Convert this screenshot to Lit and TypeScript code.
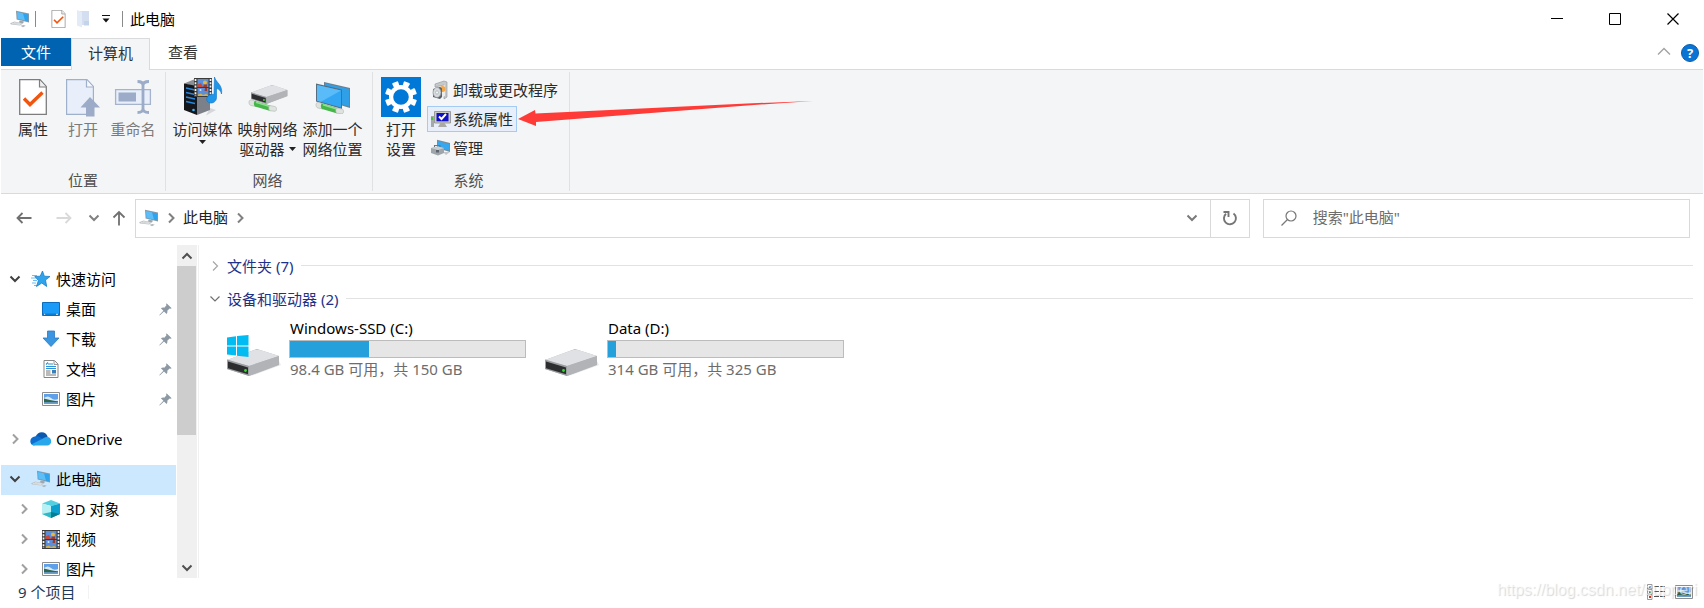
import { LitElement, html, svg, css, nothing, TemplateResult } from "lit";
import { customElement, property } from "lit/decorators.js";

const pcIcon = html`<svg width="20" height="18" viewBox="0 0 20 18" aria-hidden="true">
  <path d="M6 .8 19 3.6V12.4L6.6 9.6z" fill="#8b98a3" />
  <path d="M7 2 18.2 4.4V11.3L7.4 8.8z" fill="#2ea3ee" />
  <path d="M7 2 13 3.3 15 10.5 7.4 8.8z" fill="#5dbdf6" />
  <path d="M10 10.4 14 11.4 13 13.5 8.5 12.5z" fill="#9da7ae" />
  <path d="M0 13.2 4.5 11.6 13 13.6 10 15.6 1 14.4z" fill="#bfc5c9" />
  <path d="M2 13.4 10 14.6M4 12.6 11 13.9" stroke="#eceeef" stroke-width=".6" />
  <path d="M10.500 15.800 13.500 14.900 15.800 15.800 13 17.200z" fill="#b0b7bc" />
</svg>`;

const checkPage = (w: number, h: number) => html`<svg width=${w} height=${h} viewBox="0 0 28 36" aria-hidden="true">
  <path d="M.7.7H21L27.3 7.5V35.3H.7z" fill="#fff" stroke="#7d7d7d" stroke-width="1.3" />
  <path d="M20.5 1V8H27" fill="#f0f0f0" stroke="#7d7d7d" stroke-width="1.2" />
  <path d="M5 19.5 11 25.5 23.5 13.5" fill="none" stroke="#f0560f" stroke-width="3.4" />
</svg>`;

const folderIcon = html`<svg width="14" height="18" viewBox="0 0 14 18" aria-hidden="true">
  <path d="M3 1H12V15H3z" fill="#d3dff0" />
  <path d="M0 0 5 2V17.5L0 15.5z" fill="#e3ebf7" />
  <path d="M7 11H12V15.5H7z" fill="#c3d3ea" />
</svg>`;

const openIcon = html`<svg width="36" height="40" viewBox="0 0 36 40" aria-hidden="true">
  <path d="M1.6 2.6H22L28.4 9.5V37.4H1.6z" fill="#e8effa" stroke="#9fb0cb" stroke-width="1.2" />
  <path d="M21.5 3V10H28" fill="#f5f8fc" stroke="#9fb0cb" stroke-width="1.2" />
  <path d="M25 20 35 30.5H29.5V39.5H21V30.5H15.5z" fill="#9babc8" />
</svg>`;

const renameIcon = html`<svg width="38" height="36" viewBox="0 0 38 36" aria-hidden="true">
  <path d="M1.6 10.6H36.4V25.4H1.6z" fill="#e8effa" stroke="#a5b3cc" stroke-width="1.3" />
  <path d="M4.5 13.5H22V22.500H4.5z" fill="#9babc8" />
  <path d="M23.500 2.500C27 2.500 29 3.500 29 6.500V29.500C29 32.500 27 33.500 23.500 33.500M35 2.500C31.500 2.500 29 3.500 29 6.500M35 33.500C31.500 33.500 29 32.500 29 29.500" fill="none" stroke="#9babc8" stroke-width="2.8" />
</svg>`;

const filmFrame = svg`<path d="M0 0H18V19H0z" fill="#3b3b3b" />
  <path d="M1.500 1V18M16.500 1V18" stroke="#f2f2f2" stroke-width="1.700" stroke-dasharray="2 1.300" />
  <path d="M3.500 1H14.500V9H3.500zM3.500 10H14.500V18H3.500z" fill="#5b8fdc" />
  <path d="M3.500 6.500 7 5 9 9H3.500z" fill="#c9483c" />
  <circle cx="11" cy="4.500" r="2" fill="#e6b93a" />
  <path d="M10 6.500H13V9H9zM11 10H13V13H10.500z" fill="#9c3a2c" />
  <path d="M4 16.500 7 15.500 9 17 12 16 14 17V18H4z" fill="#dcae3c" />
  <circle cx="6.500" cy="12" r="1" fill="#d8e8ff" />`;

const mediaIcon = html`<svg width="40" height="40" viewBox="0 0 40 40" aria-hidden="true">
  <path d="M23 38.500 33 33 27 31z" fill="#d5d7da" />
  <path d="M1 6.500 12 2 27 6 14 10z" fill="#8b8f96" />
  <path d="M1 6.500 14 9V38L1 33z" fill="#14161a" />
  <path d="M14 9 27 6V33L14 38z" fill="#7c8189" />
  <path d="M3 11 12 13M3 15.500 12 17.500M3 20 12 22M3 24.500 12 26.500" stroke="#2788e0" stroke-width="1.500" />
  <circle cx="10.500" cy="33" r="1.300" fill="#39b7ff" />
  <g transform="translate(11 1)">${filmFrame}</g>
  <path d="M31.500 0C33 6 40 7.500 38.500 17C37.800 13.500 36 12 33.500 11.500V20.500C33.500 25 29 27 25.800 25.600C22.500 24 23 19.500 27 17.800C28.800 17 30 17.200 31 17.500z" fill="#1e96ea" stroke="#1274c4" stroke-width=".6" />
</svg>`;

const cable = svg`<path d="M1 5C1 3 3 2.600 4.500 3.200L8 4.500V9.500L3 8.500C1.500 8 1 7 1 5z" fill="#dfe3e0" stroke="#adb4af" stroke-width=".6" />
  <path d="M7 4 22 8.500C24 9.500 23.500 14 21.500 13.700L7 9.500C5.500 8.500 5.500 4.500 7 4z" fill="#45b649" />
  <path d="M8 5.200 21 9.200" stroke="#8fe08f" stroke-width="1.500" />
  <path d="M21.500 8.500 27 9.500C29 10 29 14 27 14.300L21.500 13.700C20.500 12 20.500 10 21.500 8.500z" fill="#dfe3e0" stroke="#adb4af" stroke-width=".6" />`;

const driveBody = svg`<path d="M0 11 30 0 52 7V16L22 27 0 20z" fill="#b4b6b9" />
  <path d="M0 11 26 1.500Q30 0 34 1.200L52 7 22 17z" fill="#dfe1e4" />
  <path d="M22 17 52 7V15.500L22 27z" fill="#b1b3b6" />
  <path d="M0 10.500 22 17V27L0 20z" fill="#9c9ea1" />
  <path d="M1 12.500 21 18.400V25.300L1 19.200z" fill="#2b2d2e" />
  <circle cx="18.500" cy="21.500" r="1.400" fill="#3ed43e" />`;

const netDriveIcon = html`<svg width="40" height="32" viewBox="0 0 40 32" aria-hidden="true">
  <g transform="translate(0 16)">${cable}</g>
  <g transform="translate(3 4) scale(.7)">${driveBody}</g>
</svg>`;

const netPlaceIcon = html`<svg width="36" height="34" viewBox="0 0 36 34" aria-hidden="true">
  <path d="M9 2 35 8V28L9 20z" fill="#6d7f8d" />
  <path d="M10 3.300 34 9V26.600L10 19.500z" fill="#2f9fe8" />
  <path d="M1 3.500 27 9.500V29L1 21.500z" fill="#566d80" />
  <path d="M2 5 26 10.500V27.600L2 20.700z" fill="#33a6f3" />
  <path d="M2 5 26 10.500 6 21.800 2 20.700z" fill="#59bbf8" />
  <g transform="translate(0 19.500)">${cable}</g>
</svg>`;

const gearTeeth = [0, 45, 90, 135, 180, 225, 270, 315];
const gearIcon = html`<svg width="40" height="40" viewBox="0 0 40 40" aria-hidden="true">
  <path d="M0 0H40V40H0z" fill="#0078d7" />
  <circle cx="20" cy="20" r="9.900" fill="none" stroke="#fff" stroke-width="4.200" />
  ${gearTeeth.map((a) => svg`<path d="M17.200 9.500 16.800 5Q16.800 4 17.800 4H22.200Q23.200 4 23.200 5L22.800 9.500z" fill="#fff" transform="rotate(${a + 22.5} 20 20)" />`)}
</svg>`;

const uninstallIcon = html`<svg width="20" height="20" viewBox="0 0 20 20" aria-hidden="true">
  <path d="M4 4 13 1 16 2V17L13 19V5L4 7z" fill="#c6c9cb" stroke="#8d9295" stroke-width=".6" />
  <path d="M9 7 14 5V16L9 18z" fill="#e9ebec" />
  <circle cx="11.500" cy="9" r="3" fill="#f2a64a" />
  <path d="M2 9 9 7 11 8.500V17L9 19 2 17z" fill="#596066" />
  <ellipse cx="6" cy="12.500" rx="4" ry="5" fill="#d5dadd" stroke="#8e979c" stroke-width=".7" />
  <ellipse cx="6" cy="12.500" rx="1.300" ry="1.700" fill="#fff" stroke="#848d92" stroke-width=".5" />
</svg>`;

const sysPropIcon = html`<svg width="20" height="20" viewBox="0 0 20 20" aria-hidden="true">
  <path d="M0 7H3V18H0z" fill="#a5aaa8" /><path d="M0 8H2V11H0z" fill="#46c436" />
  <path d="M3.500 2.500H19.500V14H3.500z" fill="#c9c9c4" stroke="#8b8b88" stroke-width=".8" />
  <path d="M5.500 4H17.500V12.300H5.500z" fill="#1010c8" />
  <path d="M8 7.500 10.500 10 15 5" fill="none" stroke="#fff" stroke-width="1.900" />
  <path d="M9.500 14H13.500L16 18H7z" fill="#a9a9a6" />
</svg>`;

const manageIcon = html`<svg width="20" height="18" viewBox="0 0 20 18" aria-hidden="true">
  <path d="M6 .8 19 4V13L6 9z" fill="#7a8a97" /><path d="M7 2.200 18.200 5V11.600L7 8.300z" fill="#35a8f0" />
  <path d="M12 13 19 13 15 16z" fill="#c2c7cb" />
  <path d="M0 9 7 7.500 13 9V14L7 16.500 0 14z" fill="#9ea6ac" /><path d="M0 9 7 7.500 13 9 7 11z" fill="#c9ced2" />
  <path d="M3.500 8V6.500H9V8" fill="none" stroke="#6e767c" stroke-width="1.100" /><path d="M5 11H8V13.500H5z" fill="#5d666d" />
</svg>`;

const starIcon = html`<svg width="20" height="18" viewBox="0 0 20 18" aria-hidden="true">
  <path d="M1 5.500H6M0 8H5M2 10.500H6M1 13H5M3 15.500H6" stroke="#6cbdf0" stroke-width="1" />
  <path d="M11.500 1 13.300 6.200 19 6.500 14.500 10 15.700 16.500 10.800 13 5.500 16.500 7.400 10.400 3.800 6.500 9.200 6.200z" fill="#2fa4ec" stroke="#1a7fc9" stroke-width=".8" />
</svg>`;

const desktopIcon = html`<svg width="18" height="14" viewBox="0 0 18 14" aria-hidden="true">
  <path d="M.5.5H17.500V13.500H.5z" fill="#1a9bf8" stroke="#0b6dbb" /><path d="M1 11.500H17V13H1z" fill="#0c7bd0" />
  <path d="M2 12.300H3.200M14 12.300H16" stroke="#fff" stroke-width=".9" />
</svg>`;

const downloadIcon = html`<svg width="18" height="18" viewBox="0 0 18 18" aria-hidden="true">
  <path d="M5.500 1H12.500V8H17L9 16.500 1 8H5.500z" fill="#3b96e2" stroke="#2a78c2" stroke-width=".8" />
</svg>`;

const docIcon = html`<svg width="16" height="18" viewBox="0 0 16 18" aria-hidden="true">
  <path d="M1 .5H11.500L15 4V17.500H1z" fill="#fff" stroke="#858585" /><path d="M11 1V4.500H15" fill="#eee" stroke="#858585" stroke-width=".8" />
  <path d="M3 4.500 5 2.500M5 4H10M3 6.500H13M3 8.500H13" stroke="#2b91d8" stroke-width="1.100" />
  <path d="M3 11H7.500M3 13H7.500M3 15H13" stroke="#777" stroke-width="1" /><path d="M9 10H13V13.500H9z" fill="#3a7fb5" />
</svg>`;

const pictureIcon = html`<svg width="18" height="14" viewBox="0 0 18 14" aria-hidden="true">
  <path d="M.5.5H17.500V13.500H.5z" fill="#fff" stroke="#8d8d8d" />
  <path d="M2 2H16V12H2z" fill="#5fa0e8" /><path d="M2 6Q6 3 9 6T16 7V9H2z" fill="#d6e9fb" />
  <path d="M2 6.500 8 8 16 9.500V10.500H2z" fill="#2f6650" /><path d="M2 10.300H16V12H2z" fill="#6f9ec6" />
</svg>`;

const cloudIcon = html`<svg width="22" height="14" viewBox="0 0 22 14" aria-hidden="true">
  <path d="M5.500 5C6.500 2 9 .3 11.700.3C14.700.3 17 2.300 17.700 5L11 9z" fill="#0a58b0" />
  <path d="M4.800 4.500C7 4 9 4.600 10.500 5.600L14 7.700 4 13.500C1.700 13.300.3 11.400.3 9.200C.3 6.700 2.300 4.600 4.800 4.500z" fill="#0f6fd0" />
  <path d="M17 5C19.700 5 21.200 7 21.200 9.300C21.200 11.700 19.500 13.600 17 13.600H5C3.600 13.600 2.500 13 1.700 12.200L13 6.500C14.300 5.500 15.500 5 17 5z" fill="#28a8ea" />
</svg>`;

const cubeIcon = html`<svg width="18" height="18" viewBox="0 0 18 18" aria-hidden="true">
  <path d="M0 3.500 9 0 18 3.500 9 6z" fill="#53cfdf" /><path d="M0 3.500 9 6V18L0 14z" fill="#b9f0f3" />
  <path d="M18 3.500 9 6V18L18 14z" fill="#0b9fd0" /><path d="M0 14 9 12V18z" fill="#2fb8c6" /><path d="M18 14 9 12V18z" fill="#067c93" />
</svg>`;

const filmIcon = html`<svg width="18" height="19" viewBox="0 0 18 19" aria-hidden="true">${filmFrame}</svg>`;

const pinIcon = html`<svg class="pin" width="13" height="13" viewBox="0 0 13 13" aria-hidden="true">
  <path d="M7.500.3 12.700 5.200 11.300 5.800 10.600 5.500 8.300 7.800C8.600 9.200 8.300 10.300 7.600 11L5 8.400 1 12.300.2 12.600.6 11.800 4.400 7.800 1.900 5.300C2.900 4.600 4 4.400 5.300 4.700L7.500 2.300 7.100 1.500z" fill="#8c98a3" />
</svg>`;

type Dir = "up" | "down" | "right";
const turn: Record<Dir, string> = {
  down: "M1.500 3.500 6 8 10.500 3.500",
  up: "M1.500 8.500 6 4 10.500 8.500",
  right: "M4 1.500 8.500 6 4 10.500",
};
const chevron = (dir: Dir, color: string, weight = 2) => html`<svg width="12" height="12" viewBox="0 0 12 12" aria-hidden="true">
  <path d=${turn[dir]} fill="none" stroke=${color} stroke-width=${weight} />
</svg>`;

const arrow = (dir: "left" | "right" | "up", color: string) => {
  const d = {
    left: "M15.500 8H1.500M6.500 3 1.500 8 6.500 13",
    right: "M.5 8H14.500M9.500 3 14.500 8 9.500 13",
    up: "M8 15.500V2M2.500 7.500 8 2 13.500 7.500",
  }[dir];
  return html`<svg width="16" height="16" viewBox="0 0 16 16" aria-hidden="true"><path d=${d} fill="none" stroke=${color} stroke-width="1.800" /></svg>`;
};

const caret = html`<svg class="caret" width="7" height="4" viewBox="0 0 7 4" aria-hidden="true"><path d="M0 0H7L3.500 4z" fill="#222" /></svg>`;

interface Node {
  label: string;
  icon: TemplateResult;
  level: 0 | 1;
  open?: boolean;
  pinned?: boolean;
  selected?: boolean;
}

const tree: Node[][] = [
  [
    { label: "快速访问", icon: starIcon, level: 0, open: true },
    { label: "桌面", icon: desktopIcon, level: 1, pinned: true },
    { label: "下载", icon: downloadIcon, level: 1, pinned: true },
    { label: "文档", icon: docIcon, level: 1, pinned: true },
    { label: "图片", icon: pictureIcon, level: 1, pinned: true },
  ],
  [{ label: "OneDrive", icon: cloudIcon, level: 0, open: false }],
  [
    { label: "此电脑", icon: pcIcon, level: 0, open: true, selected: true },
    { label: "3D 对象", icon: cubeIcon, level: 1, open: false },
    { label: "视频", icon: filmIcon, level: 1, open: false },
    { label: "图片", icon: pictureIcon, level: 1, open: false },
  ],
];

const base = css`
  * { box-sizing: border-box; }
  svg { display: block; flex: none; }
  button, input {
    font: inherit; color: inherit; background: none; border: 0; margin: 0; padding: 0;
    text-align: left; border-radius: 0; outline: none;
  }
`;

@customElement("ribbon-bar")
class RibbonBar extends LitElement {
  static styles = [base, css`
    :host { display: flex; height: 125px; background: #f4f5f7; border: 1px solid #d9dadc; border-width: 1px 0; color: #2b2b2b; }
    .group { display: flex; flex-direction: column; justify-content: space-between; margin: 2px 0; padding: 5px 7px 1px; border-right: 1px solid #dfe1e3; }
    .network { padding-left: 4px; }
    .system { padding-left: 2px; }
    .row { display: flex; align-items: flex-start; }
    .caption { text-align: center; color: #505050; line-height: 20px; }
    .big { width: 50px; display: flex; flex-direction: column; align-items: center; gap: 2px; text-align: center; line-height: 20px; white-space: nowrap; }
    .network .big { width: 65px; }
    .system .big { width: 52px; }
    .pic { height: 40px; display: flex; align-items: center; justify-content: center; }
    .big:disabled { color: #7b7b7b; }
    .line { display: flex; align-items: center; justify-content: center; gap: 4px; }
    .under { height: 6px; }
    .list { display: flex; flex-direction: column; align-items: flex-start; gap: 3px; }
    .small { height: 26px; display: flex; align-items: center; gap: 2px; padding: 0 3px; border: 1px solid transparent; white-space: nowrap; }
    .hot { border-color: #a3cbf3; background: #e8effa; }
    .anchor { position: relative; }
    .pointer { position: absolute; left: 100%; top: -6px; pointer-events: none; }
  `];

  private big(icon: TemplateResult, label: unknown, disabled = false) {
    return html`<button class="big" ?disabled=${disabled}><span class="pic">${icon}</span><span>${label}</span></button>`;
  }

  render() {
    return html`
      <section class="group">
        <div class="row">
          ${this.big(checkPage(28, 36), "属性")}
          ${this.big(openIcon, "打开", true)}
          ${this.big(renameIcon, "重命名", true)}
        </div>
        <div class="caption">位置</div>
      </section>
      <section class="group network">
        <div class="row">
          ${this.big(mediaIcon, html`访问媒体<span class="line under">${caret}</span>`)}
          ${this.big(netDriveIcon, html`映射网络<span class="line">驱动器${caret}</span>`)}
          ${this.big(netPlaceIcon, html`添加一个<br />网络位置`)}
        </div>
        <div class="caption">网络</div>
      </section>
      <section class="group system">
        <div class="row">
          ${this.big(gearIcon, html`打开<br />设置`)}
          <div class="list">
            <button class="small">${uninstallIcon}<span>卸载或更改程序</span></button>
            <div class="anchor">
              <button class="small hot">${sysPropIcon}<span>系统属性</span></button>
              <svg class="pointer" width="300" height="28" viewBox="0 0 300 28" aria-hidden="true">
                <path d="M1 19 18 10 18.500 13.500 230 3.500 296 1 230 5.500 19 22 19 26z" fill="#ff3b38" />
              </svg>
            </div>
            <button class="small">${manageIcon}<span>管理</span></button>
          </div>
        </div>
        <div class="caption">系统</div>
      </section>`;
  }
}

@customElement("nav-tree")
class NavTree extends LitElement {
  static styles = [base, css`
    :host { display: flex; width: 198px; flex: none; min-height: 0; overflow: hidden; border-right: 1px solid #f0f0f0; }
    .tree { flex: 1; min-width: 0; display: flex; flex-direction: column; gap: 10px; margin-right: 1px; padding-top: 20px; overflow: hidden; }
    .branch { flex: none; }
    .item { width: 100%; height: 30px; display: flex; align-items: center; padding: 0 4px 2px 8px; line-height: 16px; }
    .child { padding-left: 17px; }
    .twist { width: 12px; flex: none; }
    .icon { width: 22px; margin: 0 4px 0 9px; display: flex; justify-content: center; flex: none; }
    .child .icon { margin-left: 10px; }
    .label { flex: 1; white-space: nowrap; }
    .selected { background: #cce8ff; }
    .scroll { width: 20px; margin-right: 1px; display: flex; flex-direction: column; background: #f0f0f0; }
    .step { height: 21px; display: flex; align-items: center; justify-content: center; }
    .track { flex: 1; }
    .thumb { height: 58%; margin-right: 1px; background: #cdcdcd; }
  `];

  private item(n: Node) {
    const twist = n.open === undefined ? nothing
      : n.open ? chevron("down", "#404040", 2) : chevron("right", "#a0a0a0", 2);
    return html`<button class="item ${n.level ? "child" : ""} ${n.selected ? "selected" : ""}">
      <span class="twist">${twist}</span><span class="icon">${n.icon}</span><span class="label">${n.label}</span>
      ${n.pinned ? pinIcon : nothing}
    </button>`;
  }

  render() {
    return html`
      <nav class="tree">${tree.map((b) => html`<div class="branch">${b.map((n) => this.item(n))}</div>`)}</nav>
      <div class="scroll">
        <button class="step" aria-label="向上滚动">${chevron("up", "#505050", 2)}</button>
        <div class="track"><div class="thumb"></div></div>
        <button class="step" aria-label="向下滚动">${chevron("down", "#505050", 2)}</button>
      </div>`;
  }
}

@customElement("drive-tile")
class DriveTile extends LitElement {
  @property() name = "";
  @property() detail = "";
  @property({ type: Number }) used = 0;
  @property({ type: Boolean }) system = false;

  static styles = [base, css`
    :host { display: flex; gap: 8px; width: 318px; }
    .art { padding-top: 17px; }
    .info { width: 237px; line-height: 20px; white-space: nowrap; }
    .name { padding-left: 1px; color: #000; }
    .bar { height: 18px; margin: 2px 0 1px; border: 1px solid #bcbcbc; background: #e6e6e6; }
    .fill { height: 100%; background: #26a0da; }
    .detail { padding-left: 1px; color: #6d6d6d; }
  `];

  render() {
    return html`
      <div class="art">
        <svg width="54" height="41" viewBox="0 0 54 41" aria-hidden="true">
          <path d="M24 41 54 30 52 26z" fill="#e8e9ea" />
          <g transform="translate(0 14)">${driveBody}</g>
          ${this.system ? svg`<path d="M0 2.500 9 1.200V10.500H0zM10 1 21.500 0V10.500H10zM0 11.500H9V20.500L0 19.500zM10 11.500H21.500V22L10 20.700z" fill="#00bcf2" />` : nothing}
        </svg>
      </div>
      <div class="info">
        <div class="name">${this.name}</div>
        <div class="bar" role="meter" aria-label=${this.name} aria-valuenow=${this.used}><div class="fill" style="width:${this.used}%"></div></div>
        <div class="detail">${this.detail}</div>
      </div>`;
  }
}

@customElement("app-root")
class AppRoot extends LitElement {
  static styles = [base, css`
    :host {
      display: flex; flex-direction: column; height: 100vh; padding: 0 1px; overflow: hidden; background: #fff; color: #000;
      font: 15px/20px "Noto Sans", "Noto Sans CJK SC", sans-serif;
    }
    .title { height: 38px; flex: none; display: flex; align-items: center; padding: 0 1px 0 9px; }
    .quick { display: flex; align-items: center; }
    .rule { width: 1px; height: 16px; background: #8a8a8a; }
    .gap-s { margin: 0 15px 0 5px; }
    .gap-m { margin: 0 7px 0 12px; }
    .quick button + button { margin-left: 11px; }
    .caption { flex: 1; font: inherit; margin: 0; }
    .win { width: 58px; height: 38px; display: flex; align-items: center; justify-content: center; }
    .tabs { height: 31px; flex: none; display: flex; align-items: flex-start; }
    .file { width: 70px; height: 28px; text-align: center; background: #0063b1; color: #fff; }
    .tab { width: 79px; height: 32px; padding-bottom: 4px; text-align: center; color: #333; }
    .active { background: #f4f5f7; border: 1px solid #d9dadc; border-bottom: 0; position: relative; }
    .view { width: 66px; }
    .spring { flex: 1; }
    .fold { margin: 8px 10px 0 0; }
    .help { margin: 6px 4px 0 0; width: 18px; height: 18px; border-radius: 50%; background: #0a74d4; border: 1px solid #0a5fae; color: #fff; font-weight: 700; font-size: 13px; line-height: 16px; text-align: center; }
    .nav { flex: none; height: 51px; display: flex; align-items: center; padding: 0 13px 3px 15px; }
    .arrows { display: flex; align-items: center; width: 119px; flex: none; }
    .arrows button:nth-child(2) { margin-left: 24px; }
    .arrows button:nth-child(3) { margin-left: 16px; }
    .arrows button:nth-child(4) { margin-left: 11px; }
    .address, .search { height: 39px; display: flex; align-items: center; border: 1px solid #d9d9d9; min-width: 0; }
    .address { flex: 1109; margin-right: 13px; padding-left: 3px; color: #222; }
    .search { flex: 400; padding: 0 8px 0 17px; gap: 16px; }
    .crumbs { flex: 1; display: flex; align-items: center; gap: 6px; }
    .crumbs span, .search input { padding-bottom: 2px; }
    .drop { width: 24px; display: flex; justify-content: center; }
    .refresh { width: 39px; height: 37px; margin-left: 6px; display: flex; align-items: center; justify-content: center; border-left: 1px solid #d9d9d9; }
    .search input { flex: 1; min-width: 0; }
    .search input::placeholder { color: #6d6d6d; opacity: 1; }
    .main { flex: 1; min-height: 0; display: flex; }
    .content { flex: 1; min-width: 0; padding: 4px 10px 0 10px; }
    .head { margin: 0; font: inherit; height: 33px; display: flex; align-items: center; gap: 8px; color: #1e3287; }
    .head::after { content: ""; flex: 1; height: 1px; background: #e2e2e2; }
    .head button { display: flex; align-items: center; gap: 6px; white-space: nowrap; }
    .drives { display: flex; flex-wrap: wrap; padding: 3px 0 0 18px; }
    .status { flex: none; height: 30px; display: flex; align-items: center; padding: 0 10px 3px 17px; color: #1f3a57; }
    .count { padding-right: 13px; border-right: 1px solid #f2f2f2; line-height: 14px; }
    .views { margin-left: auto; display: flex; align-items: center; gap: 10px; position: relative; }
    .mark { position: absolute; right: -4px; bottom: 1px; font: 16px/18px "Liberation Sans", Arial, sans-serif; color: rgba(255, 255, 255, .6); text-shadow: 1px 1px 1px rgba(0, 0, 0, .16); white-space: nowrap; pointer-events: none; }
  `];

  render() {
    return html`
      <header class="title">
        <div class="quick">
          ${pcIcon}<span class="rule gap-s"></span>
          <button aria-label="属性">${checkPage(15, 18)}</button>
          <button aria-label="新建文件夹">${folderIcon}</button>
          <button aria-label="自定义快速访问工具栏">
            <svg width="8" height="8" viewBox="0 0 8 8"><path d="M0 0H8V1H0zM.5 3.500H7.500L4 7.500z" fill="#111" /></svg>
          </button>
          <span class="rule gap-m"></span>
        </div>
        <h1 class="caption">此电脑</h1>
        <button class="win" aria-label="最小化"><svg width="12" height="12"><path d="M0 5H12V6H0z" /></svg></button>
        <button class="win" aria-label="最大化"><svg width="12" height="12"><path d="M.5.5H11.500V11.500H.5z" fill="none" stroke="#000" /></svg></button>
        <button class="win" aria-label="关闭"><svg width="12" height="12"><path d="M.5.5 11.500 11.500M11.500.5.5 11.500" stroke="#000" stroke-width="1.200" /></svg></button>
      </header>
      <div class="tabs">
        <button class="file">文件</button>
        <button class="tab active">计算机</button>
        <button class="tab view">查看</button>
        <span class="spring"></span>
        <button class="fold" aria-label="折叠功能区">
          <svg width="14" height="12" viewBox="0 0 14 12"><path d="M1 8.500 7 2.500 13 8.500" fill="none" stroke="#a3a3a3" stroke-width="1.400" /></svg>
        </button>
        <button class="help" aria-label="帮助">?</button>
      </div>
      <ribbon-bar></ribbon-bar>
      <div class="nav">
        <div class="arrows">
          <button aria-label="后退">${arrow("left", "#707070")}</button>
          <button aria-label="前进" disabled>${arrow("right", "#d9d9d9")}</button>
          <button aria-label="最近位置">${chevron("down", "#808080", 2)}</button>
          <button aria-label="上移">${arrow("up", "#707070")}</button>
        </div>
        <div class="address">
          <div class="crumbs">${pcIcon}${chevron("right", "#808080", 2)}<span>此电脑</span>${chevron("right", "#808080", 2)}</div>
          <button class="drop" aria-label="历史记录">${chevron("down", "#7a7a7a", 2)}</button>
          <button class="refresh" aria-label="刷新">
            <svg width="16" height="16" viewBox="0 0 16 16"><path d="M11.500 3.500A6 6 0 1 1 4 3.800M1.500 2H6.500V7" fill="none" stroke="#757575" stroke-width="1.900" /></svg>
          </button>
        </div>
        <label class="search">
          <svg width="16" height="16" viewBox="0 0 16 16" aria-hidden="true"><circle cx="10" cy="6" r="5" fill="none" stroke="#777" stroke-width="1.200" /><path d="M6.500 9.500.5 15.500" stroke="#777" stroke-width="1.200" /></svg>
          <input type="text" aria-label="搜索" placeholder='搜索"此电脑"' />
        </label>
      </div>
      <div class="main">
        <nav-tree></nav-tree>
        <main class="content">
          <h2 class="head"><button>${chevron("right", "#a6a6a6", 1.2)}文件夹 (7)</button></h2>
          <h2 class="head"><button>${chevron("down", "#707070", 1.2)}设备和驱动器 (2)</button></h2>
          <div class="drives">
            <drive-tile name="Windows-SSD (C:)" detail="98.4 GB 可用，共 150 GB" used="33.5" system></drive-tile>
            <drive-tile name="Data (D:)" detail="314 GB 可用，共 325 GB" used="3.3"></drive-tile>
          </div>
        </main>
      </div>
      <footer class="status">
        <span class="count">9 个项目</span>
        <div class="views">
          <button aria-label="详细信息">
            <svg width="18" height="16" viewBox="0 0 18 16">
              <path d="M.5.5H5V5H.5zM.5 5.500H5V10H.5zM.5 10.500H5V15.500H.5z" fill="#fff" stroke="#999" />
              <path d="M2 2H4V4H2z" fill="#2b6fc0" /><path d="M2 7H4V9H2z" fill="#5a8a2c" /><path d="M2 12H4V14H2z" fill="#c8321e" />
              <path d="M7 2.500H18M7 7.500H18M7 12.500H18" stroke="#555" stroke-dasharray="5 1" />
            </svg>
          </button>
          <button aria-label="大图标">${pictureIcon}</button>
          <span class="mark">https://blog.csdn.net/supperi</span>
        </div>
      </footer>`;
  }
}
